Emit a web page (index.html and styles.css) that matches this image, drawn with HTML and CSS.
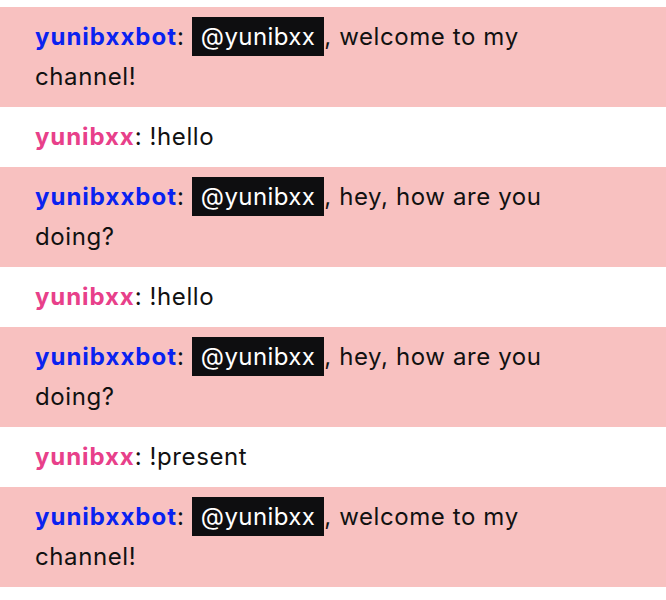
FILE: index.html
```html
<!DOCTYPE html>
<html>
<head>
<meta charset="utf-8">
<link rel="stylesheet" href="styles.css">
</head>
<body>
<div class="chat">
  <div class="msg bot"><span class="bot-name">yunibxxbot</span>: <span class="mention">@yunibxx</span>, welcome to my channel!</div>
  <div class="msg"><span class="user-name">yunibxx</span>: !hello</div>
  <div class="msg bot"><span class="bot-name">yunibxxbot</span>: <span class="mention">@yunibxx</span>, hey, how are you doing?</div>
  <div class="msg"><span class="user-name">yunibxx</span>: !hello</div>
  <div class="msg bot"><span class="bot-name">yunibxxbot</span>: <span class="mention">@yunibxx</span>, hey, how are you doing?</div>
  <div class="msg"><span class="user-name">yunibxx</span>: !present</div>
  <div class="msg bot"><span class="bot-name">yunibxxbot</span>: <span class="mention">@yunibxx</span>, welcome to my channel!</div>
</div>
</body>
</html>
```

FILE: styles.css
```css
html, body {
  margin: 0;
  padding: 0;
  background: #ffffff;
}
body {
  font-family: Inter, "Noto Sans", sans-serif;
  font-size: 24px;
  color: #111111;
  letter-spacing: 0.6px;
}
.chat {
  padding-top: 7px;
  display: flex;
  flex-direction: column;
}
.msg {
  padding: 10px 55px 10px 35px;
  line-height: 40px;
}
.msg.bot {
  background: #f8c1c0;
}
.bot-name {
  color: #0a22f0;
  font-weight: 700;
  letter-spacing: 1px;
}
.user-name {
  color: #e8408a;
  font-weight: 700;
  letter-spacing: 0.9px;
}
.mention {
  background: #0e0e10;
  color: #ffffff;
  padding: 5px 9px;
  letter-spacing: 0.4px;
}
```
